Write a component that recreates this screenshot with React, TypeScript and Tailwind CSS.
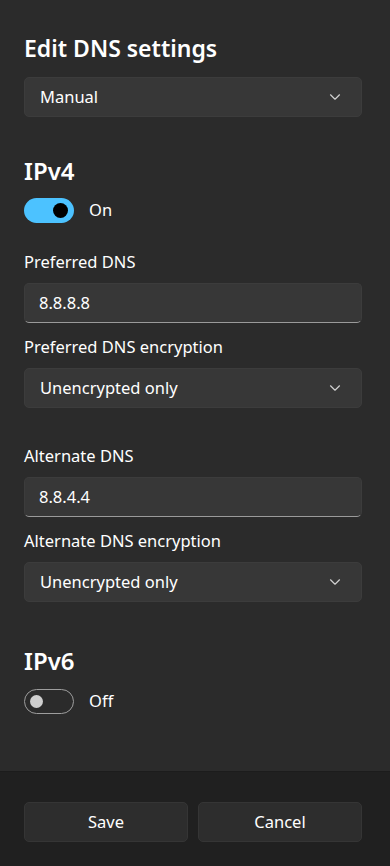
import React, { useState } from 'react';

const FONT = { fontFamily: '"Segoe UI", "Noto Sans", "Open Sans", sans-serif' };

function Chevron() {
  return (
    <svg width="12" height="8" viewBox="0 0 12 8" fill="none" className="shrink-0">
      <path d="M1.5 1.8 L6 6.2 L10.5 1.8" stroke="#d0d0d0" strokeWidth="1.2" strokeLinecap="round" strokeLinejoin="round" />
    </svg>
  );
}

function Dropdown({ value }: { value: string }) {
  return (
    <div className="h-[40px] w-full rounded-[5px] bg-[#373737] border border-[#3c3c3c] flex items-center justify-between pl-[15px] pr-[20px]">
      <span className="text-[16.5px] text-white">{value}</span>
      <Chevron />
    </div>
  );
}

function TextInput({ value }: { value: string }) {
  return (
    <div className="h-[40px] w-full rounded-[5px] bg-[#373737] border border-[#3c3c3c] border-b-[#9a9a9a] flex items-center pl-[14px]">
      <span className="text-[16.5px] text-white">{value}</span>
    </div>
  );
}

function Toggle({ on, onClick }: { on: boolean; onClick: () => void }) {
  return (
    <button onClick={onClick} className="flex items-center gap-[15px]">
      {on ? (
        <span className="w-[50px] h-[25px] rounded-full bg-[#4cc2ff] flex items-center justify-end pr-[6px]">
          <span className="w-[15px] h-[15px] rounded-full bg-black" />
        </span>
      ) : (
        <span className="w-[50px] h-[25px] rounded-full border border-[#9d9d9d] flex items-center pl-[5px]">
          <span className="w-[13px] h-[13px] rounded-full bg-[#cecece]" />
        </span>
      )}
      <span className="text-[16.5px] text-white">{on ? 'On' : 'Off'}</span>
    </button>
  );
}

function Field({ label, children }: { label: string; children: React.ReactNode }) {
  return (
    <div className="flex flex-col gap-[10px]">
      <span className="text-[16.5px] text-white leading-[22px]">{label}</span>
      {children}
    </div>
  );
}

export default function App() {
  const [ipv4, setIpv4] = useState(true);
  const [ipv6, setIpv6] = useState(false);

  return (
    <div style={FONT} className="w-[390px] h-[866px] bg-[#2b2b2b] flex flex-col overflow-hidden">
      <div className="flex-1 pl-[24px] pr-[28px] pt-[32px]">
        <h1 className="text-[23px] font-semibold text-white leading-[32px]">Edit DNS settings</h1>
        <div className="mt-[13px]">
          <Dropdown value="Manual" />
        </div>

        {/* IPv4 */}
        <h2 className="mt-[39px] text-[24px] font-semibold text-white leading-[30px]">IPv4</h2>
        <div className="mt-[12px]">
          <Toggle on={ipv4} onClick={() => setIpv4(!ipv4)} />
        </div>

        <div className="mt-[28px] flex flex-col gap-[13px]">
          <Field label="Preferred DNS">
            <TextInput value="8.8.8.8" />
          </Field>
          <Field label="Preferred DNS encryption">
            <Dropdown value="Unencrypted only" />
          </Field>
        </div>

        <div className="mt-[37px] flex flex-col gap-[13px]">
          <Field label="Alternate DNS">
            <TextInput value="8.8.4.4" />
          </Field>
          <Field label="Alternate DNS encryption">
            <Dropdown value="Unencrypted only" />
          </Field>
        </div>

        {/* IPv6 */}
        <h2 className="mt-[44px] text-[24px] font-semibold text-white leading-[30px]">IPv6</h2>
        <div className="mt-[13px]">
          <Toggle on={ipv6} onClick={() => setIpv6(!ipv6)} />
        </div>
      </div>

      <div className="h-[95px] bg-[#202020] border-t border-[#1c1c1c] pl-[24px] pr-[28px] pt-[30px]">
        <div className="grid grid-cols-2 gap-[10px]">
          <button className="h-[40px] rounded-[5px] bg-[#2d2d2d] border border-[#353535] text-[16.5px] text-white">Save</button>
          <button className="h-[40px] rounded-[5px] bg-[#2d2d2d] border border-[#353535] text-[16.5px] text-white">Cancel</button>
        </div>
      </div>
    </div>
  );
}
